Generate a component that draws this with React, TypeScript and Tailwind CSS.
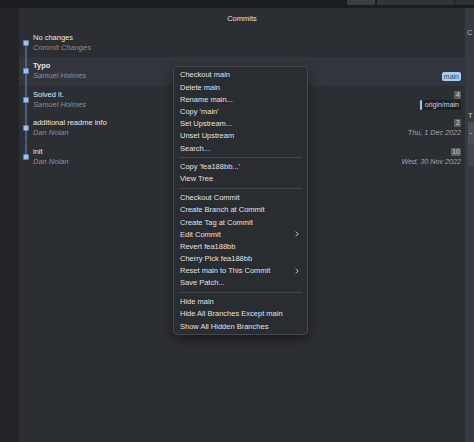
import React from "react";

type Row = {
  title: string;
  sub: string;
  bold?: boolean;
  selected?: boolean;
  right1?: React.ReactNode;
  right2?: React.ReactNode;
  first?: boolean;
  last?: boolean;
};

const Count = ({ n }: { n: string }) => (
  <span className="inline-flex h-[8px] items-center rounded-[1px] bg-[#5b5e63] px-[1.5px] text-[6.5px] leading-[8px] text-[#d6d6d6]">
    {n}
  </span>
);

const rows: Row[] = [
  { title: "No changes", sub: "Commit Changes", first: true },
  {
    title: "Typo",
    sub: "Samuel Holmes",
    bold: true,
    selected: true,
    right2: (
      <span className="inline-flex h-[9px] items-center rounded-[2px] bg-[#a9cdf2] px-[2px] text-[7px] leading-[9px] text-[#1f4670]">
        main
      </span>
    ),
  },
  {
    title: "Solved it.",
    sub: "Samuel Holmes",
    right1: <Count n="4" />,
    right2: (
      <span className="inline-flex h-[10px] items-stretch">
        <span className="w-[2px] rounded-[1px] bg-[#9cc3ee]" />
        <span className="ml-[1px] flex items-center bg-[#1e2024] px-[2px] text-[7px] leading-[10px] text-[#d2d2d2]">
          origin/main
        </span>
      </span>
    ),
  },
  {
    title: "additional readme info",
    sub: "Dan Nolan",
    right1: <Count n="2" />,
    right2: <span className="text-[7.2px] italic text-[#a3a5a9]">Thu, 1 Dec 2022</span>,
  },
  {
    title: "init",
    sub: "Dan Nolan",
    last: true,
    right1: <Count n="10" />,
    right2: <span className="text-[7.2px] italic text-[#a3a5a9]">Wed, 30 Nov 2022</span>,
  },
];

type MenuEntry = { label: string; sub?: boolean } | "sep";

const menu: MenuEntry[] = [
  { label: "Checkout main" },
  { label: "Delete main" },
  { label: "Rename main..." },
  { label: "Copy 'main'" },
  { label: "Set Upstream..." },
  { label: "Unset Upstream" },
  { label: "Search..." },
  "sep",
  { label: "Copy 'fea188bb...'" },
  { label: "View Tree" },
  "sep",
  { label: "Checkout Commit" },
  { label: "Create Branch at Commit" },
  { label: "Create Tag at Commit" },
  { label: "Edit Commit", sub: true },
  { label: "Revert fea188bb" },
  { label: "Cherry Pick fea188bb" },
  { label: "Reset main to This Commit", sub: true },
  { label: "Save Patch..." },
  "sep",
  { label: "Hide main" },
  { label: "Hide All Branches Except main" },
  { label: "Show All Hidden Branches" },
];

function Graph({ first, last }: { first?: boolean; last?: boolean }) {
  return (
    <svg width="14" height="28.5" viewBox="0 0 14 28.5" className="shrink-0">
      <line
        x1="7"
        x2="7"
        y1={first ? 13.5 : 0}
        y2={last ? 13.5 : 28.5}
        stroke="#6f93bb"
        strokeWidth="1"
      />
      <rect x="4.5" y="11.5" width="5" height="5" fill="#9cc1ea" stroke="#5e86b3" strokeWidth="0.6" />
    </svg>
  );
}

export default function App() {
  return (
    <div
      className="relative flex h-[442px] w-[474px] flex-col overflow-hidden bg-[#2b2e33]"
      style={{ fontFamily: '"Liberation Sans", Arial, sans-serif' }}
    >
      {/* top strip */}
      <div className="flex h-[8px] shrink-0 bg-[#1c1d21]">
        <div className="flex-1" />
        <div className="h-[5px] w-[28px] rounded-b-[1px] bg-[#3b3d41]" />
        <div className="ml-[2px] h-[5px] w-[77px] bg-[#323438]" />
        <div className="ml-[1px] h-[5px] w-[19px] bg-[#2e3034]" />
      </div>

      <div className="flex min-h-0 flex-1">
        {/* left sidebar */}
        <div className="w-[19px] shrink-0 bg-[#222428]" />

        {/* main panel */}
        <div className="flex min-w-0 flex-1 flex-col bg-[#2b2e33]">
          <div className="flex h-[20.5px] shrink-0 items-center justify-center pt-[1px] text-[7.5px] text-[#e4e4e4]">
            Commits
          </div>
          {rows.map((r) => (
            <div
              key={r.title}
              className={`flex h-[28.5px] shrink-0 ${r.selected ? "bg-[#32363c]" : ""}`}
            >
              <Graph first={r.first} last={r.last} />
              <div className="flex min-w-0 flex-1 flex-col pt-[4px] text-[7.5px] leading-[10px]">
                <div className={`${r.bold ? "font-bold" : ""} text-[#e8e8e8]`}>{r.title}</div>
                <div className="italic text-[#8f9196]">{r.sub}</div>
              </div>
              <div className="flex flex-col items-end pr-[4px] pt-[4px] text-[7.5px] leading-[10px]">
                <div className="flex h-[10px] items-center">{r.right1}</div>
                <div className="flex h-[10px] items-center">{r.right2}</div>
              </div>
            </div>
          ))}
        </div>

        {/* right sidebar */}
        <div className="flex w-[9px] shrink-0 flex-col overflow-hidden bg-[#363a41] text-[7.5px] text-[#b4b6ba]">
          <div className="mt-[20px] pl-[2px] leading-[10px]">C</div>
          <div className="mt-[73px] pl-[3px] leading-[10px] text-[#d0d0d0]">T</div>
          <div className="ml-[3px] mt-[1px] flex h-[22px] items-center bg-[#4a4e55] pl-[1px]">
            <div className="h-[1px] w-[3px] bg-[#8a8d92]" />
          </div>
          <div className="ml-[3px] h-[22px] bg-[#41454c]" />
        </div>
      </div>

      {/* context menu */}
      <div className="absolute left-[173px] top-[66px] w-[135px] rounded-[4px] border border-[#46494e] bg-[#292c31] pb-[2px] pt-[2px] shadow-[0_4px_12px_rgba(0,0,0,0.45)]">
        {menu.map((m, i) =>
          m === "sep" ? (
            <div key={i} className="flex h-[6.5px] items-center px-[5px]">
              <div className="h-px w-full bg-[#44474c]" />
            </div>
          ) : (
            <div
              key={i}
              className="flex h-[12.2px] items-center justify-between pl-[6px] pr-[8px] text-[7.5px] text-[#e2e2e2]"
            >
              <span>{m.label}</span>
              {m.sub && (
                <svg width="4" height="6" viewBox="0 0 4 6">
                  <path d="M0.8 0.6 L3.2 3 L0.8 5.4" fill="none" stroke="#d8d8d8" strokeWidth="0.9" />
                </svg>
              )}
            </div>
          )
        )}
      </div>
    </div>
  );
}
